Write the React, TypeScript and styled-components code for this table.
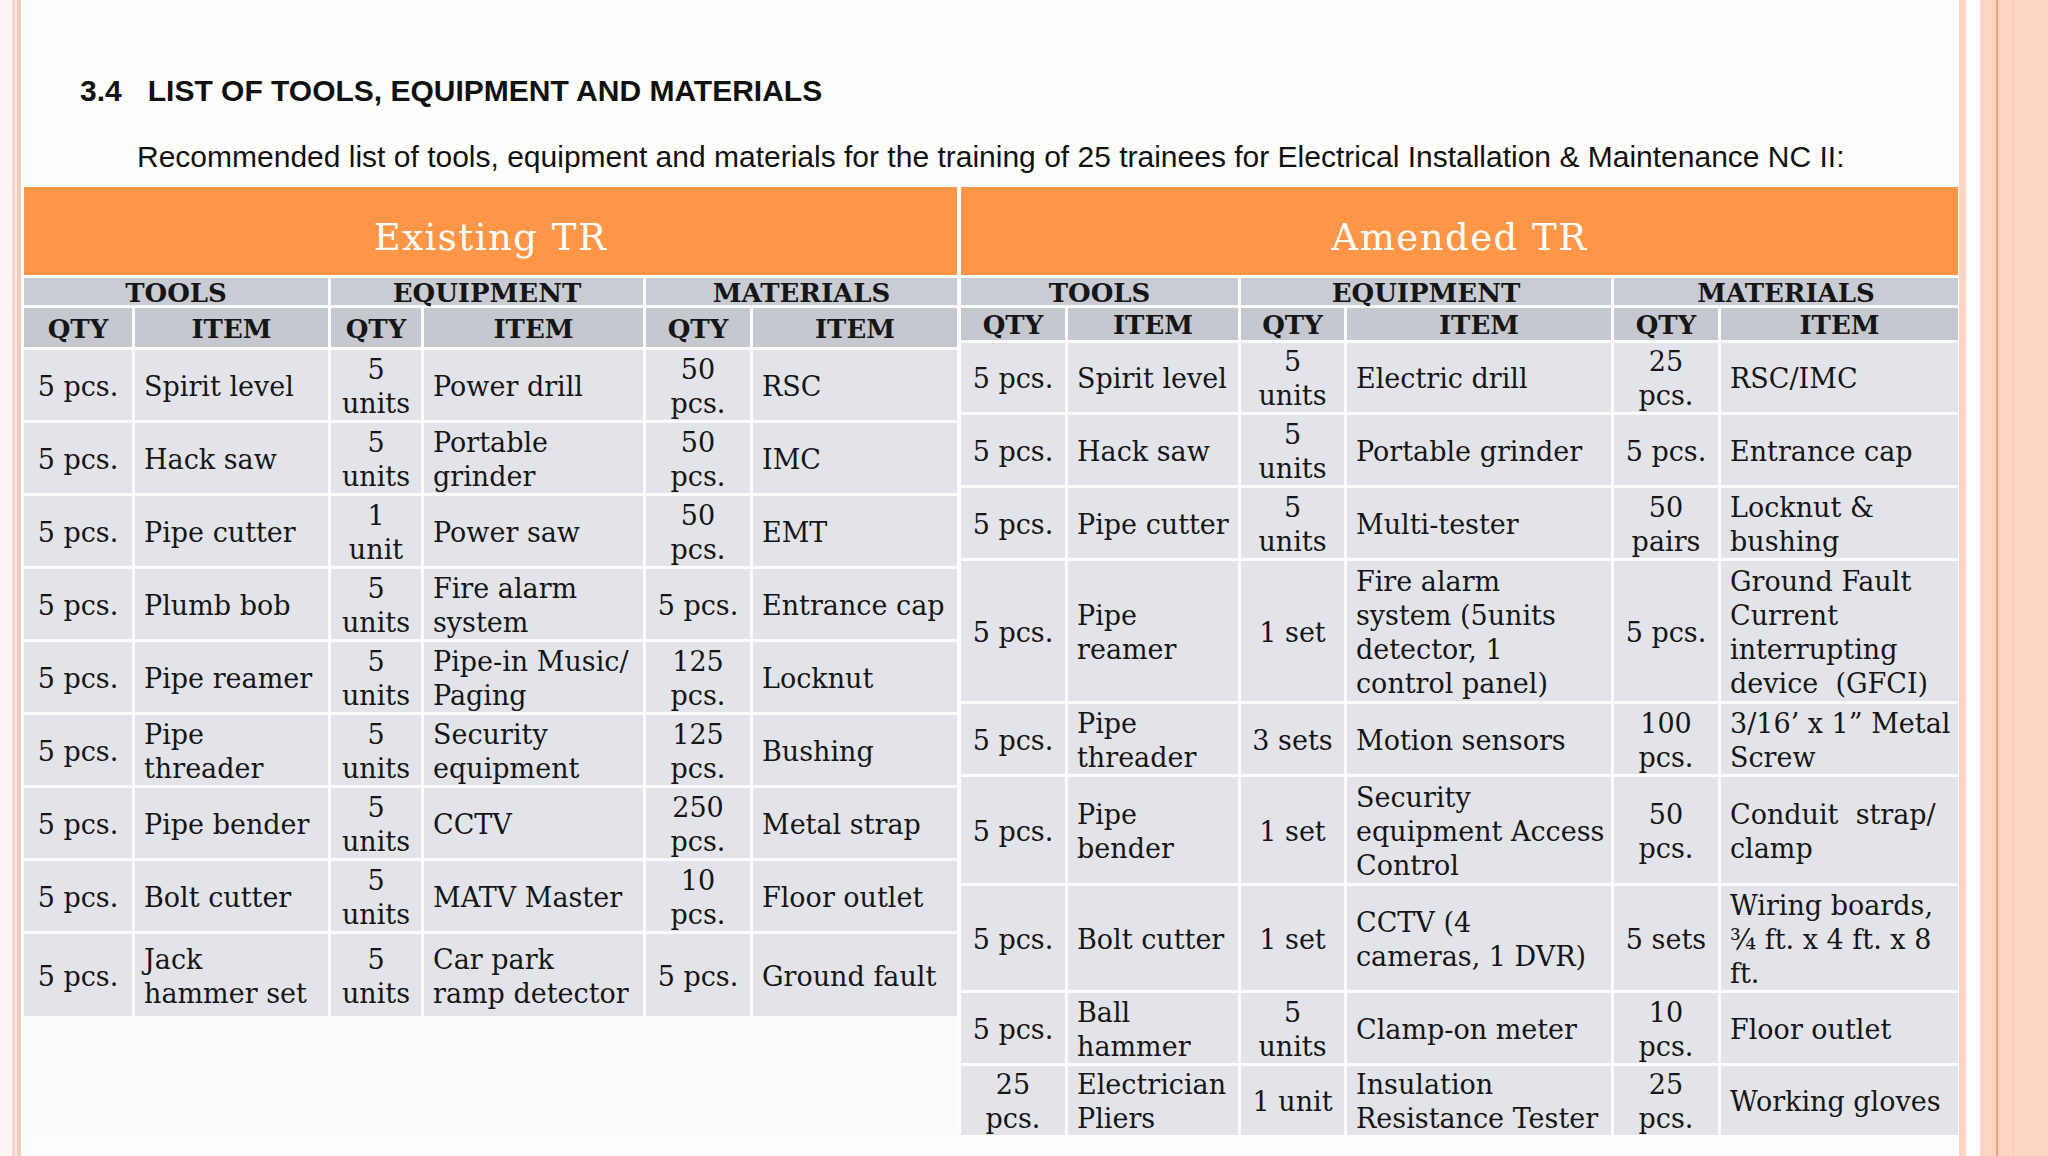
import styled, { createGlobalStyle } from 'styled-components';

const GlobalStyle = createGlobalStyle`
  html, body {
    margin: 0;
    padding: 0;
    background: #fdfdfb;
  }
`;

const Page = styled.div`
  display: flex;
  width: 2048px;
  height: 1156px;
  overflow: hidden;
  background: #fdfdfb;
`;

const LeftEdge = styled.div`
  width: 21px;
  flex-shrink: 0;
  background: linear-gradient(
    to right,
    #fdf6f3 0px, #fdf6f3 12px,
    #fbd2c4 12px, #fbd2c4 15px,
    #fde7df 15px, #fde7df 17px,
    #fccbbb 17px, #fccbbb 21px
  );
`;

const RightEdge = styled.div`
  width: 89px;
  flex-shrink: 0;
  background: linear-gradient(
    to right,
    #fbd6c7 0px, #fbd6c7 7px,
    #ffffff 7px, #ffffff 21px,
    #fcd4c3 21px, #fcd4c3 37px,
    #f0a476 37px, #f0a476 39px,
    #fcd4c3 39px, #fcd4c3 54px,
    #f7c6b1 54px, #f7c6b1 55px,
    #fcd4c3 55px
  );
`;

const Slide = styled.div`
  flex: 1;
  padding: 76px 0 0 3px;
  display: flex;
  flex-direction: column;
`;

const Heading = styled.div`
  font-family: 'Liberation Sans', Arial, sans-serif;
  font-weight: bold;
  font-size: 30px;
  line-height: 29px;
  color: #111;
  margin-left: 56px;
  display: flex;
  gap: 26px;
`;

const Intro = styled.div`
  font-family: 'Liberation Sans', Arial, sans-serif;
  font-size: 30px;
  line-height: 30px;
  color: #111;
  margin: 37px 0 0 113px;
  white-space: nowrap;
`;

const Tables = styled.div`
  display: flex;
  gap: 4px;
  margin-top: 15px;
`;

const Grid = styled.div<{ $cols: string; $rows: string }>`
  display: grid;
  grid-template-columns: ${p => p.$cols};
  grid-template-rows: ${p => p.$rows};
  gap: 3px;
  background: #fbfbfb;
`;

const Banner = styled.div`
  grid-column: 1 / -1;
  background: #fd9646;
  color: #fff;
  font-family: 'DejaVu Serif', 'Liberation Serif', serif;
  font-size: 37px;
  letter-spacing: 1.5px;
  display: flex;
  align-items: center;
  justify-content: center;
  padding-top: 12px;
`;

const Cell = styled.div<{ $tone: 'group' | 'head' | 'body'; $left?: boolean; $span?: number }>`
  grid-column: span ${p => p.$span ?? 1};
  background: ${p => (p.$tone === 'body' ? '#e3e4e9' : p.$tone === 'group' ? '#c9ccd2' : '#c5c8ce')};
  color: #161616;
  font-family: 'DejaVu Serif', 'Liberation Serif', serif;
  font-size: ${p => (p.$tone === 'body' ? '27px' : '26px')};
  font-weight: ${p => (p.$tone === 'body' ? 'normal' : 'bold')};
  line-height: ${p => (p.$tone === 'body' ? '34px' : '27px')};
  display: flex;
  flex-direction: column;
  justify-content: center;
  align-items: ${p => (p.$left ? 'flex-start' : 'center')};
  text-align: ${p => (p.$left ? 'left' : 'center')};
  padding: ${p => (p.$left ? '3px 0 0 9px' : '3px 0 0')};
  white-space: pre;
`;

type Row = [string, string, string, string, string, string];

const existing: Row[] = [
  ['5 pcs.', 'Spirit level', '5\nunits', 'Power drill', '50\npcs.', 'RSC'],
  ['5 pcs.', 'Hack saw', '5\nunits', 'Portable\ngrinder', '50\npcs.', 'IMC'],
  ['5 pcs.', 'Pipe cutter', '1\nunit', 'Power saw', '50\npcs.', 'EMT'],
  ['5 pcs.', 'Plumb bob', '5\nunits', 'Fire alarm\nsystem', '5 pcs.', 'Entrance cap'],
  ['5 pcs.', 'Pipe reamer', '5\nunits', 'Pipe-in Music/\nPaging', '125\npcs.', 'Locknut'],
  ['5 pcs.', 'Pipe\nthreader', '5\nunits', 'Security\nequipment', '125\npcs.', 'Bushing'],
  ['5 pcs.', 'Pipe bender', '5\nunits', 'CCTV', '250\npcs.', 'Metal strap'],
  ['5 pcs.', 'Bolt cutter', '5\nunits', 'MATV Master', '10\npcs.', 'Floor outlet'],
  ['5 pcs.', 'Jack\nhammer set', '5\nunits', 'Car park\nramp detector', '5 pcs.', 'Ground fault'],
];

const amended: Row[] = [
  ['5 pcs.', 'Spirit level', '5\nunits', 'Electric drill', '25\npcs.', 'RSC/IMC'],
  ['5 pcs.', 'Hack saw', '5\nunits', 'Portable grinder', '5 pcs.', 'Entrance cap'],
  ['5 pcs.', 'Pipe cutter', '5\nunits', 'Multi-tester', '50\npairs', 'Locknut &\nbushing'],
  ['5 pcs.', 'Pipe\nreamer', '1 set', 'Fire alarm\nsystem (5units\ndetector, 1\ncontrol panel)', '5 pcs.', 'Ground Fault\nCurrent\ninterrupting\ndevice  (GFCI)'],
  ['5 pcs.', 'Pipe\nthreader', '3 sets', 'Motion sensors', '100\npcs.', '3/16’ x 1” Metal\nScrew'],
  ['5 pcs.', 'Pipe\nbender', '1 set', 'Security\nequipment Access\nControl', '50\npcs.', 'Conduit  strap/\nclamp'],
  ['5 pcs.', 'Bolt cutter', '1 set', 'CCTV (4\ncameras, 1 DVR)', '5 sets', 'Wiring boards,\n¾ ft. x 4 ft. x 8\nft.'],
  ['5 pcs.', 'Ball\nhammer', '5\nunits', 'Clamp-on meter', '10\npcs.', 'Floor outlet'],
  ['25\npcs.', 'Electrician\nPliers', '1 unit', 'Insulation\nResistance Tester', '25\npcs.', 'Working gloves'],
];

interface TRTableProps {
  title: string;
  cols: string;
  rows: string;
  data: Row[];
}

function TRTable(props: TRTableProps) {
  return (
    <Grid $cols={props.cols} $rows={props.rows}>
      <Banner>{props.title}</Banner>
      {['TOOLS', 'EQUIPMENT', 'MATERIALS'].map(g => (
        <Cell key={g} $tone="group" $span={2}>{g}</Cell>
      ))}
      {[0, 1, 2].map(i => [
        <Cell key={'q' + i} $tone="head">QTY</Cell>,
        <Cell key={'i' + i} $tone="head">ITEM</Cell>,
      ])}
      {props.data.map((row, r) =>
        row.map((text, c) => (
          <Cell key={r + '-' + c} $tone="body" $left={c % 2 === 1}>{text}</Cell>
        ))
      )}
    </Grid>
  );
}

export default function App() {
  return (
    <Page>
      <GlobalStyle />
      <LeftEdge />
      <Slide>
        <Heading>
          <span>3.4</span>
          <span>LIST OF TOOLS, EQUIPMENT AND MATERIALS</span>
        </Heading>
        <Intro>
          Recommended list of tools, equipment and materials for the training of 25 trainees for Electrical Installation &amp; Maintenance NC II:
        </Intro>
        <Tables>
          <TRTable
            title="Existing TR"
            cols="108px 193px 90px 219px 104px 204px"
            rows="88px 27px 39px repeat(8, 70px) 82px"
            data={existing}
          />
          <TRTable
            title="Amended TR"
            cols="104px 170px 103px 264px 104px 237px"
            rows="88px 27px 32px 69px 70px 70px 140px 70px 106px 104px 70px 69px"
            data={amended}
          />
        </Tables>
      </Slide>
      <RightEdge />
    </Page>
  );
}
